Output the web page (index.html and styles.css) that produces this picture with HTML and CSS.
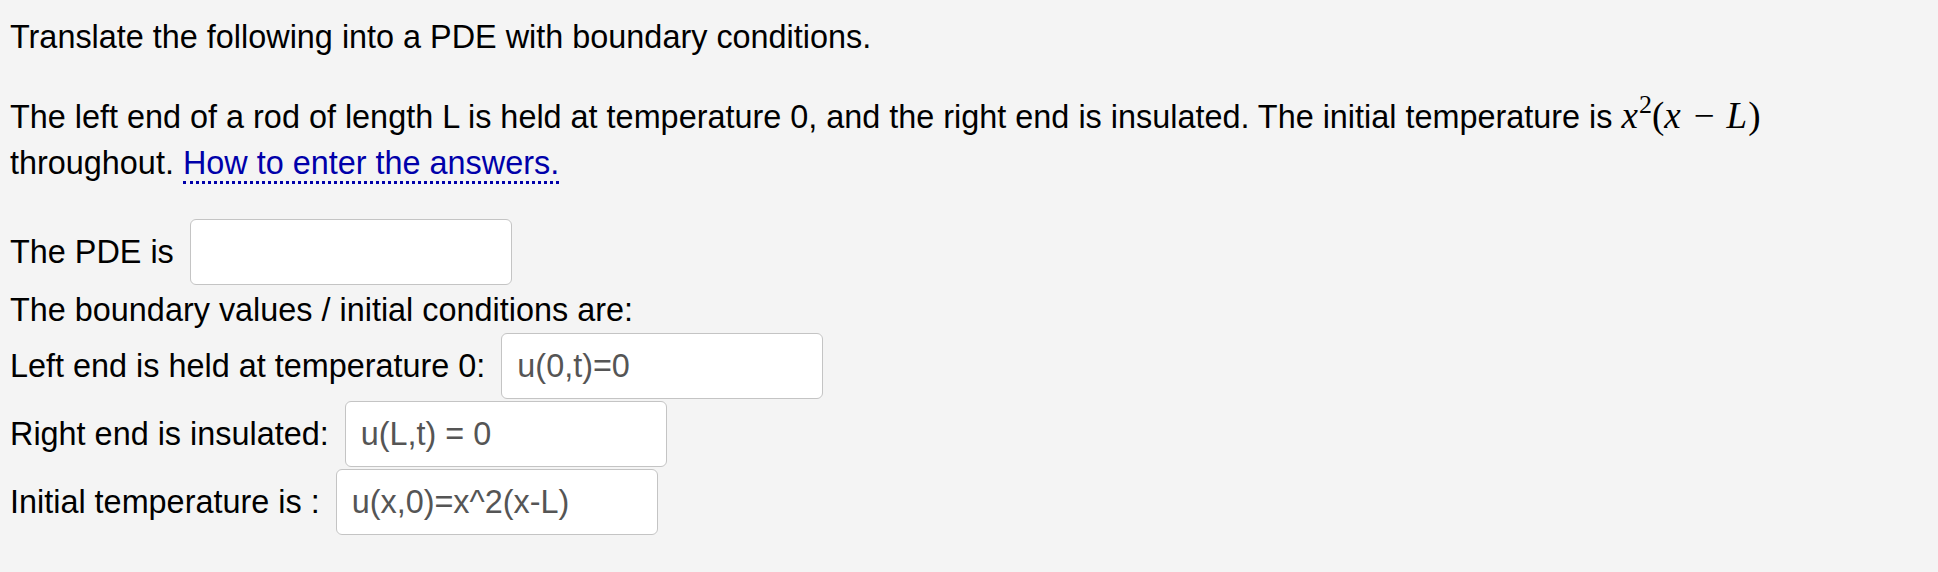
FILE: index.html
```html
<!DOCTYPE html>
<html lang="en">
<head>
    <meta charset="UTF-8">
    <meta name="viewport" content="width=device-width, initial-scale=1.0">
    <title>PDE Problem</title>
    <link rel="stylesheet" href="styles.css">
</head>
<body>
    <div class="problem">
        <p>Translate the following into a PDE with boundary conditions.</p>
        <p>
            The left end of a rod of length L is held at temperature 0, and the right end is insulated. The initial temperature is
            <span class="math"><i>x</i><sup>2</sup>(<i>x</i><span class="op">&minus;</span><i>L</i>)</span>
            throughout. <a href="#" class="help-link">How to enter the answers.</a>
        </p>
        <div class="answer-row">
            <label for="pde">The PDE is</label>
            <input type="text" id="pde" class="answer">
        </div>
        <div class="text-line">The boundary values / initial conditions are:</div>
        <div class="answer-row">
            <label for="left">Left end is held at temperature 0:</label>
            <input type="text" id="left" class="answer" value="u(0,t)=0">
        </div>
        <div class="answer-row">
            <label for="right">Right end is insulated:</label>
            <input type="text" id="right" class="answer" value="u(L,t) = 0">
        </div>
        <div class="answer-row">
            <label for="initial">Initial temperature is :</label>
            <input type="text" id="initial" class="answer" value="u(x,0)=x^2(x-L)">
        </div>
    </div>
</body>
</html>
```
FILE: styles.css
```css
body {
    margin: 0;
    background-color: #f4f4f4;
    font-family: "Liberation Sans", Arial, sans-serif;
    font-size: 32.4px;
    line-height: 46px;
    color: #000;
}
.problem {
    max-width: 1800px;
    padding: 14px 10px;
}
p {
    margin: 0 0 33px;
}
.math {
    font-family: "Liberation Serif", "Times New Roman", serif;
    font-size: 37px;
}
.math i {
    margin-right: 1px;
}
.math sup {
    font-style: normal;
    font-size: 26px;
    line-height: 0;
    vertical-align: 15px;
}
.math .op {
    margin: 0 12px;
}
.help-link {
    color: #0000aa;
    text-decoration: none;
    border-bottom: 3px dotted #0000aa;
}
.answer-row {
    display: flex;
    align-items: baseline;
    gap: 16px;
    margin-bottom: 2px;
}
.answer {
    box-sizing: border-box;
    width: 322px;
    height: 66px;
    padding: 0 15px;
    border: 1px solid #c4c4c4;
    border-radius: 6px;
    background: #fff;
    font-family: "Liberation Sans", Arial, sans-serif;
    font-size: 32.4px;
    color: #555;
}
```
